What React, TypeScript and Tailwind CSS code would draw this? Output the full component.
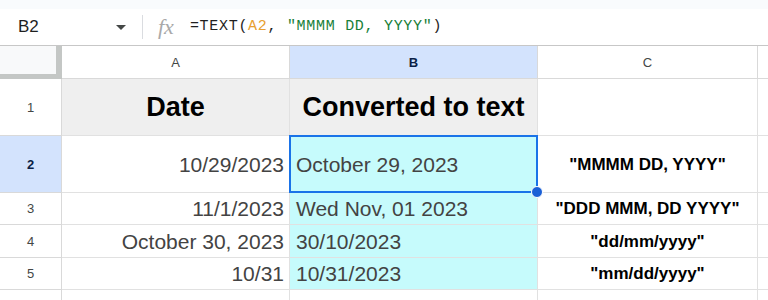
import type { ReactNode } from 'react';

const font = { fontFamily: '"Liberation Sans", Arial, sans-serif' };

type Row = {
	num: string;
	height: string;
	a: ReactNode;
	b: ReactNode;
	c: ReactNode;
	header?: boolean;
	selected?: boolean;
};

const rows: Row[] = [
	{ num: '1', height: 'h-[57px]', a: 'Date', b: 'Converted to text', c: '', header: true },
	{ num: '2', height: 'h-[57px]', a: '10/29/2023', b: 'October 29, 2023', c: '"MMMM DD, YYYY"', selected: true },
	{ num: '3', height: 'h-[32px]', a: '11/1/2023', b: 'Wed Nov, 01 2023', c: '"DDD MMM, DD YYYY"' },
	{ num: '4', height: 'h-[33px]', a: 'October 30, 2023', b: '30/10/2023', c: '"dd/mm/yyyy"' },
	{ num: '5', height: 'h-[32px]', a: '10/31', b: '10/31/2023', c: '"mm/dd/yyyy"' },
	{ num: '6', height: 'h-[33px]', a: '', b: '', c: '' },
];

const FormulaBar = () => (
	<div className="flex h-[37px] items-center border-b border-[#c7c7c7] bg-white">
		<div className="w-[110px] pl-[18px] text-[17px] text-[#1f1f1f]">B2</div>
		<svg width="12" height="12" viewBox="0 0 12 12" className="ml-[5px]">
			<path d="M1 4h10L6 9z" fill="#444746"/>
		</svg>
		<div className="ml-[15px] h-[24px] w-px bg-[#dadce0]"/>
		<span className="ml-[15px] text-[22px] italic leading-none text-[#a9a9a9]" style={{ fontFamily: '"Liberation Serif", serif' }}>fx</span>
		<div className="ml-[16px] text-[15px] tracking-[0.7px] text-[#1f1f1f] whitespace-pre" style={{ fontFamily: '"Liberation Mono", monospace' }}>
			=TEXT(<span className="text-[#e8a030]">A2</span>, <span className="text-[#188038]">"MMMM DD, YYYY"</span>)
		</div>
	</div>
);

const ColumnHeaders = () => (
	<div className="grid h-[33px] grid-cols-[62px_228px_248px_220px_1fr] text-[13px] leading-none">
		<div className="border-r-[6px] border-b-[5px] border-[#c4c7c5] bg-[#f8f9fa]"/>
		<div className="flex items-center justify-center border-r border-b border-[#d9d9d9] bg-white text-[#444746]">A</div>
		<div className="flex items-center justify-center border-r border-b border-[#d9d9d9] bg-[#d3e3fd] font-bold text-[#0b1f46]">B</div>
		<div className="flex items-center justify-center border-r border-b border-[#d9d9d9] bg-white text-[#444746]">C</div>
		<div className="border-b border-[#d9d9d9] bg-white"/>
	</div>
);

const DataRow = ({ row }: { row: Row }) => (
	<div className={`grid grid-cols-[62px_228px_248px_220px_1fr] leading-none ${row.height}`}>
		<div className={`flex items-center justify-center border-r border-b border-[#d9d9d9] text-[13px] ${row.selected ? 'bg-[#d3e3fd] font-bold text-[#0b1f46]' : 'bg-white text-[#444746]'}`}>
			{row.num}
		</div>
		{row.header ? (
			<>
				<div className="flex items-center justify-center border-r border-b border-[#e1e1e1] bg-[#efefef] text-[27px] font-bold text-black">{row.a}</div>
				<div className="flex items-center justify-center border-r border-b border-[#e1e1e1] bg-[#efefef] text-[27px] font-bold text-black">{row.b}</div>
			</>
		) : (
			<>
				<div className="flex items-center justify-end border-r border-b border-[#e1e1e1] bg-white pr-[5px] text-[21px] text-[#434343]">{row.a}</div>
				<div className={`relative flex items-center border-r border-b border-[#e1e1e1] pl-[6px] text-[21px] text-[#434343] ${row.num === '6' ? 'bg-white' : 'bg-[#c6fbfc]'}`}>
					{row.b}
					{row.selected && (
						<div className="absolute -inset-px z-10 border-2 border-[#1a73e8]">
							<div className="absolute right-[-7px] bottom-[-7px] h-[12px] w-[12px] rounded-full border border-white bg-[#1a5fd6]"/>
						</div>
					)}
				</div>
			</>
		)}
		<div className="flex items-center justify-center border-r border-b border-[#e1e1e1] bg-white text-[17px] font-bold text-black">{row.c}</div>
		<div className="border-b border-[#e1e1e1] bg-white"/>
	</div>
);

export default function App() {
	return (
		<div className="h-[300px] w-[768px] overflow-hidden bg-white" style={font}>
			<div className="h-[9px] bg-[#f9fbfd]"/>
			<FormulaBar/>
			<ColumnHeaders/>
			{rows.map(row => <DataRow key={row.num} row={row}/>)}
		</div>
	);
}
